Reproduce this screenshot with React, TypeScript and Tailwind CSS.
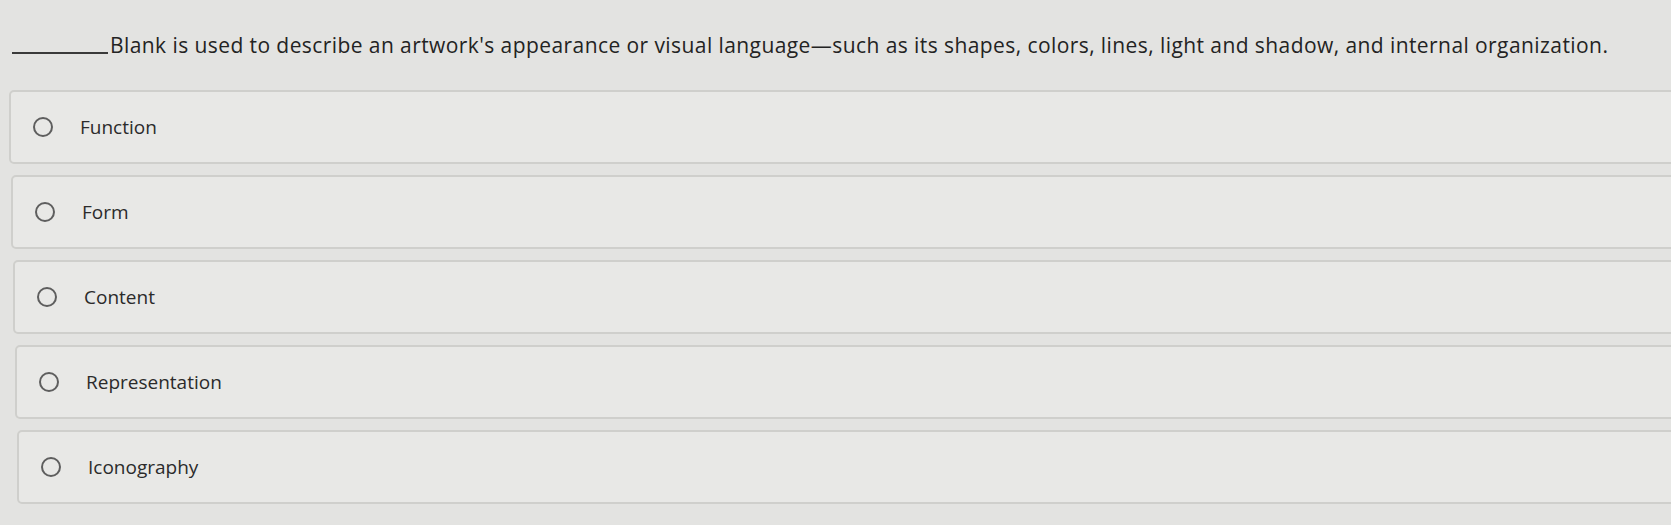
const options = [
  { label: 'Function', shift: 'ml-0' },
  { label: 'Form', shift: 'ml-[2px]' },
  { label: 'Content', shift: 'ml-[4px]' },
  { label: 'Representation', shift: 'ml-[6px]' },
  { label: 'Iconography', shift: 'ml-[8px]' },
];

function RadioOption({ label, shift }: { label: string; shift: string }) {
  return (
    <label className={`flex h-[74px] items-center rounded-[5px] border-2 border-[#cfcfcc] bg-[#e8e8e6] pl-[22px] ${shift}`}>
      <span className="h-[20px] w-[20px] shrink-0 rounded-full border-2 border-[#5e5e5e]" />
      <span className="ml-[27px] text-[19px] font-medium text-[#2b2b2b]">{label}</span>
    </label>
  );
}

export default function App() {
  return (
    <div
      className="h-[525px] w-[1671px] overflow-hidden bg-[#e3e3e1] pt-[32px] pl-[12px]"
      style={{ fontFamily: '"Open Sans", Lato, sans-serif' }}
    >
      <p className="flex items-end text-[21px] font-medium leading-[26px] tracking-[0.42px] text-[#232323]">
        <span className="mb-[4px] inline-block h-[2px] w-[96px] bg-[#3a3a3a]" />
        <span className="ml-[2px]">
          Blank is used to describe an artwork's appearance or visual language—such as its shapes, colors, lines, light and
          shadow, and internal organization.
        </span>
      </p>
      <div className="mt-[32px] -ml-[3px] -mr-[6px] flex flex-col gap-[11px]">
        {options.map((o) => (
          <RadioOption key={o.label} label={o.label} shift={o.shift} />
        ))}
      </div>
    </div>
  );
}
